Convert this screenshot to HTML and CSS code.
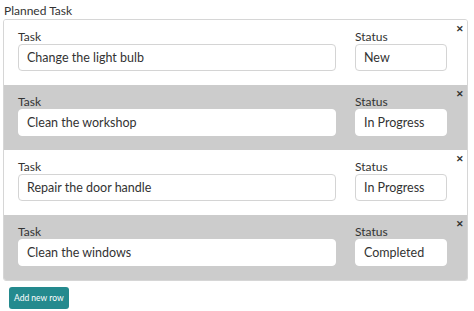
FILE: index.html
```html
<!DOCTYPE html>
<html lang="en">
<head>
    <meta charset="UTF-8">
    <meta name="viewport" content="width=device-width, initial-scale=1.0">
    <title>Planned Task</title>
    <link rel="stylesheet" href="styles.css">
</head>
<body>

    <div class="planner">
        <div class="title">Planned Task</div>

        <div class="rows">
            <div class="row">
                <div class="field task-field">
                    <label>Task</label>
                    <input type="text" value="Change the light bulb">
                </div>
                <div class="field status-field">
                    <label>Status</label>
                    <input type="text" value="New">
                </div>
                <button class="remove-btn">&#x2715;</button>
            </div>

            <div class="row shaded">
                <div class="field task-field">
                    <label>Task</label>
                    <input type="text" value="Clean the workshop">
                </div>
                <div class="field status-field">
                    <label>Status</label>
                    <input type="text" value="In Progress">
                </div>
                <button class="remove-btn">&#x2715;</button>
            </div>

            <div class="row">
                <div class="field task-field">
                    <label>Task</label>
                    <input type="text" value="Repair the door handle">
                </div>
                <div class="field status-field">
                    <label>Status</label>
                    <input type="text" value="In Progress">
                </div>
                <button class="remove-btn">&#x2715;</button>
            </div>

            <div class="row shaded">
                <div class="field task-field">
                    <label>Task</label>
                    <input type="text" value="Clean the windows">
                </div>
                <div class="field status-field">
                    <label>Status</label>
                    <input type="text" value="Completed">
                </div>
                <button class="remove-btn">&#x2715;</button>
            </div>
        </div>

        <button class="add-btn">Add new row</button>
    </div>

</body>
</html>
```

FILE: styles.css
```css
/* General Styles */
body {
    font-family: Lato, "Open Sans", sans-serif;
    color: #333;
    background: #fff;
    margin: 0;
    padding: 3px 6px 0 3px;
}

.title {
    font-size: 12px;
    line-height: 16px;
    padding-left: 1px;
}

.rows {
    border: 1px solid #d6d6d6;
    border-radius: 3px;
    overflow: hidden;
}

.row {
    position: relative;
    display: flex;
    gap: 19px;
    height: 65px;
    box-sizing: border-box;
    padding: 10px 14px 14px 14px;
    background: #fff;
}

.row.shaded {
    background: #cccccc;
}

.field {
    display: flex;
    flex-direction: column;
}

.task-field {
    width: 318px;
}

.status-field {
    width: 92px;
}

label {
    font-size: 12px;
    line-height: 13px;
}

input {
    height: 28px;
    margin-top: 1px;
    box-sizing: border-box;
    border: 1px solid #d4d4d4;
    border-radius: 4px;
    padding: 0 8px;
    font-family: inherit;
    font-size: 12.5px;
    color: #333;
    background: #fff;
}

.shaded input {
    border-color: #fff;
}

/* Remove button (top right of each row) */
.remove-btn {
    position: absolute;
    top: 4px;
    right: 3px;
    border: none;
    background: none;
    padding: 0;
    font-size: 9px;
    font-weight: bold;
    color: #333;
    cursor: pointer;
}

/* Add new row button */
.add-btn {
    margin: 6px 0 0 6px;
    height: 22px;
    padding: 0 5px;
    background: #248a8e;
    color: #fff;
    border: none;
    border-radius: 3px;
    font-family: inherit;
    font-size: 8.5px;
    cursor: pointer;
}
```
